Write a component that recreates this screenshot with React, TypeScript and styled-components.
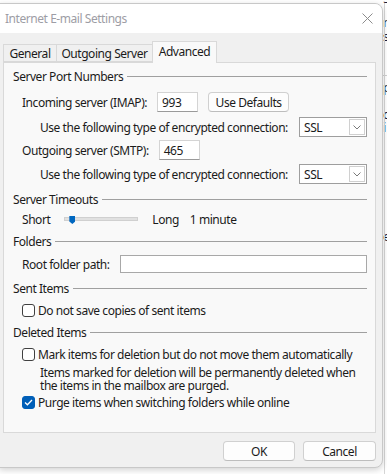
import React from 'react'
import styled, { createGlobalStyle } from 'styled-components'

const GlobalStyle = createGlobalStyle`
  html, body { margin: 0; padding: 0; }
  body {
    background: #ffffff;
    font-family: "Noto Sans", "Liberation Sans", sans-serif;
    font-size: 12px;
    letter-spacing: -0.45px;
    color: #1b1b1b;
  }
`

const Desktop = styled.div`
  position: relative;
  width: 387px;
  height: 474px;
  overflow: hidden;
  background: #ffffff;
`

// bits of the app window behind the dialog
const BackText = styled.span<{ $x: number; $y: number; $c?: string }>`
  position: absolute;
  left: ${p => p.$x}px;
  top: ${p => p.$y}px;
  font-size: 13px;
  line-height: 11px;
  white-space: nowrap;
  color: ${p => p.$c || '#1f1f3a'};
`

const BackRule = styled.div<{ $y: number }>`
  position: absolute;
  left: 383px;
  right: 0;
  top: ${p => p.$y}px;
  height: 1px;
  background: #cfcfcf;
`

const BackEdge = styled.div`
  position: absolute;
  left: 384px;
  top: 3px;
  bottom: 0;
  width: 1px;
  background: #d6d6d6;
`

const Window = styled.div`
  position: absolute;
  left: -1px;
  top: 3px;
  width: 384px;
  height: 465px;
  box-sizing: border-box;
  border: 1px solid #c8c8c8;
  border-radius: 0 8px 8px 0;
  background: #f0f0f0;
  box-shadow: 0 2px 6px rgba(0, 0, 0, 0.18);
  display: flex;
  flex-direction: column;
  overflow: hidden;
`

const TitleBar = styled.div`
  height: 29px;
  flex-shrink: 0;
  background: #ffffff;
  display: flex;
  align-items: center;
  justify-content: space-between;
  padding: 0 9px 0 5px;
  color: #9d9da5;
  font-size: 12px;
`

const WindowBody = styled.div`
  flex: 1;
  display: flex;
  flex-direction: column;
  padding: 8px 6px 7px 3px;
`

const TabStrip = styled.div`
  display: flex;
  align-items: flex-end;
  height: 21px;
`

const Tab = styled.div<{ $w: number; $active?: boolean }>`
  position: relative;
  z-index: ${p => (p.$active ? 1 : 0)};
  width: ${p => p.$w}px;
  height: ${p => (p.$active ? 22 : 18)}px;
  margin-bottom: ${p => (p.$active ? -1 : 0)}px;
  margin-left: -1px;
  box-sizing: border-box;
  border: 1px solid #d9d9d9;
  border-bottom: ${p => (p.$active ? 'none' : '1px solid #d9d9d9')};
  background: ${p => (p.$active ? '#f9f9f9' : '#f0f0f0')};
  display: flex;
  align-items: center;
  justify-content: center;
  white-space: nowrap;
  padding-bottom: ${p => (p.$active ? 3 : 0)}px;

  &:first-child {
    margin-left: 0;
  }
`

const Panel = styled.div`
  height: 371px;
  box-sizing: border-box;
  border: 1px solid #d9d9d9;
  background: #f9f9f9;
  padding: 0 8px 0 9px;
  display: flex;
  flex-direction: column;
`

const Group = styled.div<{ $h: number }>`
  height: ${p => p.$h}px;
  display: flex;
  align-items: center;
  gap: 4px;
  white-space: nowrap;
`

const Rule = styled.div`
  flex: 1;
  height: 1px;
  background: #a0a0a0;
`

const Row = styled.div<{ $h: number; $indent: number }>`
  height: ${p => p.$h}px;
  display: flex;
  align-items: center;
  padding-left: ${p => p.$indent}px;
  white-space: nowrap;
`

const PortBox = styled.div`
  width: 41px;
  height: 20px;
  margin-left: 10px;
  flex-shrink: 0;
  box-sizing: border-box;
  background: #ffffff;
  border: 1px solid #d4d4d4;
  border-bottom-color: #9a9a9a;
  padding-left: 4px;
  display: flex;
  align-items: center;
`

const Button = styled.div<{ $w: number }>`
  width: ${p => p.$w}px;
  height: 20px;
  flex-shrink: 0;
  box-sizing: border-box;
  background: #fdfdfd;
  border: 1px solid #d0d0d0;
  border-bottom-color: #bdbdbd;
  border-radius: 4px;
  display: flex;
  align-items: center;
  justify-content: center;
`

const DefaultsButton = styled(Button)`
  margin-left: 10px;
`

const Select = styled.div`
  margin-left: auto;
  width: 68px;
  height: 20px;
  flex-shrink: 0;
  box-sizing: border-box;
  background: #ffffff;
  border: 1px solid #9e9e9e;
  display: flex;
  align-items: center;
  padding-left: 4px;
`

const DropButton = styled.div`
  margin-left: auto;
  margin-right: 1px;
  width: 16px;
  height: 16px;
  box-sizing: border-box;
  border: 1px solid #d0d0d0;
  display: flex;
  align-items: center;
  justify-content: center;
`

const Track = styled.div`
  position: relative;
  width: 74px;
  height: 4px;
  margin-left: 14px;
  box-sizing: border-box;
  background: #e1e1e1;
  border: 1px solid #d0d0d0;
`

const Thumb = styled.div`
  position: absolute;
  left: 4px;
  top: -2px;
  width: 6px;
  height: 8px;
  background: #0067c0;
  clip-path: polygon(0 0, 100% 0, 100% 70%, 50% 100%, 0 70%);
`

const Spaced = styled.span<{ $ml: number }>`
  margin-left: ${p => p.$ml}px;
`

const PathBox = styled.div`
  flex: 1;
  height: 18px;
  margin-left: 10px;
  box-sizing: border-box;
  background: #ffffff;
  border: 1px solid #a8a8a8;
`

const Box = styled.div<{ $checked?: boolean }>`
  width: 13px;
  height: 13px;
  flex-shrink: 0;
  margin-right: 3px;
  box-sizing: border-box;
  border: 1px solid ${p => (p.$checked ? '#005fb8' : '#404040')};
  border-radius: 3px;
  background: ${p => (p.$checked ? '#005fb8' : '#ffffff')};
  display: flex;
  align-items: center;
  justify-content: center;
`

const Note = styled.div`
  margin-top: 5px;
  padding-left: 27px;
  line-height: 13px;
  white-space: nowrap;
`

const Footer = styled.div`
  display: flex;
  justify-content: flex-end;
  gap: 8px;
  margin-top: 8px;
`

const Chevron = () => (
  <svg width="8" height="5" viewBox="0 0 8 5">
    <path d="M0.5 0.5 L4 4 L7.5 0.5" fill="none" stroke="#7a7a7a" strokeWidth="1" />
  </svg>
)

const CloseIcon = () => (
  <svg width="11" height="11" viewBox="0 0 11 11">
    <path d="M0.5 0.5 L10.5 10.5 M10.5 0.5 L0.5 10.5" stroke="#8c8c8c" strokeWidth="1" />
  </svg>
)

const Check = () => (
  <svg width="9" height="7" viewBox="0 0 9 7">
    <path d="M1 3.5 L3.4 5.8 L8 1" fill="none" stroke="#ffffff" strokeWidth="1.3" />
  </svg>
)

const Checkbox = ({ checked, children }: { checked?: boolean; children: React.ReactNode }) => (
  <Row $h={14} $indent={9}>
    <Box $checked={checked}>{checked && <Check />}</Box>
    <span>{children}</span>
  </Row>
)

const Heading = ({ h, children }: { h: number; children: React.ReactNode }) => (
  <Group $h={h}>
    <span>{children}</span>
    <Rule />
  </Group>
)

const Encryption = ({ h }: { h: number }) => (
  <Row $h={h} $indent={27}>
    <span>Use the following type of encrypted connection:</span>
    <Select>
      SSL
      <DropButton>
        <Chevron />
      </DropButton>
    </Select>
  </Row>
)

export default function App() {
  return (
    <>
      <GlobalStyle />
      <Desktop>
        <BackText $x={5} $y={-10}>Information</BackText>
        <BackText $x={333} $y={-10}>Test Acctg</BackText>
        <BackText $x={383} $y={17}>m</BackText>
        <BackText $x={383} $y={31}>s</BackText>
        <BackRule $y={75} />
        <BackText $x={383} $y={82}>p</BackText>
        <BackText $x={383} $y={109}>c</BackText>
        <BackText $x={383} $y={122} $c="#2b3fa8">i</BackText>
        <BackText $x={383} $y={231}>e</BackText>
        <BackEdge />

        <Window>
          <TitleBar>
            <span>Internet E-mail Settings</span>
            <CloseIcon />
          </TitleBar>
          <WindowBody>
            <TabStrip>
              <Tab $w={54}>General</Tab>
              <Tab $w={97}>Outgoing Server</Tab>
              <Tab $w={65} $active>Advanced</Tab>
            </TabStrip>
            <Panel>
              <Heading h={26}>Server Port Numbers</Heading>
              <Row $h={26} $indent={9}>
                <span>Incoming server (IMAP):</span>
                <PortBox>993</PortBox>
                <DefaultsButton $w={81}>Use Defaults</DefaultsButton>
              </Row>
              <Encryption h={24} />
              <Row $h={22} $indent={9}>
                <span>Outgoing server (SMTP):</span>
                <PortBox>465</PortBox>
              </Row>
              <Encryption h={26} />

              <Heading h={24}>Server Timeouts</Heading>
              <Row $h={16} $indent={9}>
                <span>Short</span>
                <Track>
                  <Thumb />
                </Track>
                <Spaced $ml={14}>Long</Spaced>
                <Spaced $ml={11}>1 minute</Spaced>
              </Row>

              <Heading h={28}>Folders</Heading>
              <Row $h={18} $indent={9}>
                <span>Root folder path:</span>
                <PathBox />
              </Row>

              <Heading h={30}>Sent Items</Heading>
              <Checkbox>Do not save copies of sent items</Checkbox>

              <Heading h={30}>Deleted Items</Heading>
              <Checkbox>Mark items for deletion but do not move them automatically</Checkbox>
              <Note>
                Items marked for deletion will be permanently deleted when
                <br />
                the items in the mailbox are purged.
              </Note>
              <div style={{ marginTop: 3 }}>
                <Checkbox checked>Purge items when switching folders while online</Checkbox>
              </div>
            </Panel>
            <Footer>
              <Button $w={72}>OK</Button>
              <Button $w={73}>Cancel</Button>
            </Footer>
          </WindowBody>
        </Window>
      </Desktop>
    </>
  )
}
